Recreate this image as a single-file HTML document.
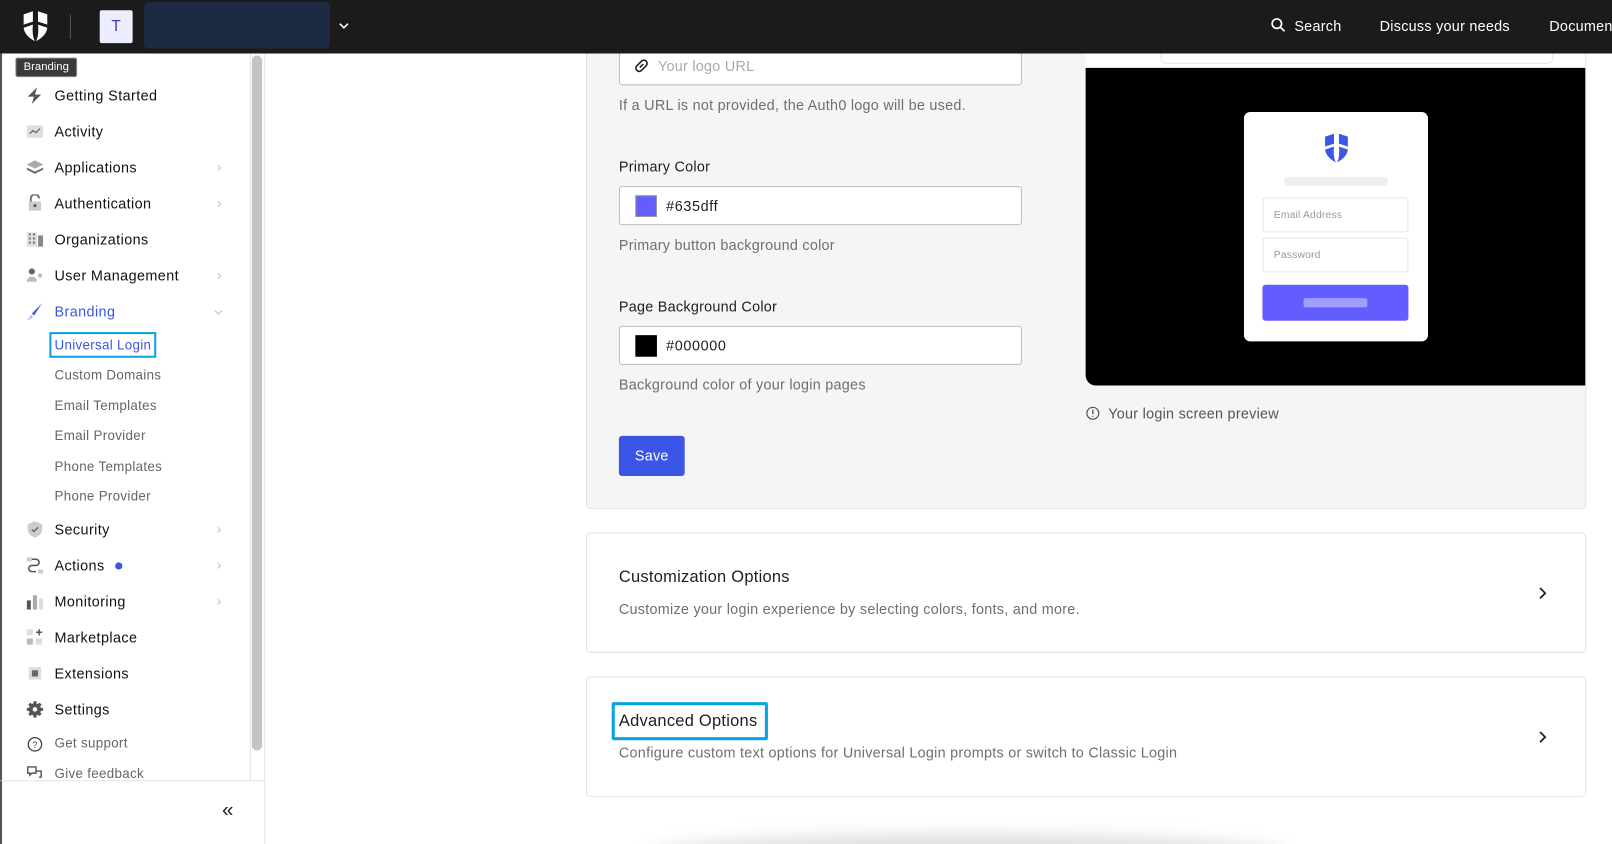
<!DOCTYPE html>
<html><head><meta charset="utf-8">
<style>
*{box-sizing:border-box;margin:0;padding:0}
html,body{width:1612px;height:844px;overflow:hidden;background:#fff;font-family:"Liberation Sans",sans-serif}
#w{position:absolute;left:0;top:0;width:1568px;height:821px;transform:scale(1.02806);transform-origin:0 0;overflow:hidden;background:#fff;letter-spacing:0.25px}
.abs{position:absolute}
.top{left:0;top:0;width:1568px;height:52px;background:#1b1b1b;z-index:5}
.side{left:0;top:52px;width:258px;height:769px;background:#fff;border-right:1px solid #e3e3e3;border-left:2px solid #555}
.nav{position:absolute;left:53px;font-size:14px;color:#111;letter-spacing:0.4px}
.sub{position:absolute;left:53px;font-size:13px;color:#666;letter-spacing:0.3px}
.ic{position:absolute;left:26px;width:16px;height:16px}
.chev{position:absolute;left:211px;color:#bbb;font-size:13px}
.card{background:#f5f5f5;border:1px solid #e3e3e3;border-radius:4px}
.input{position:absolute;left:602px;width:392px;height:38px;background:#fff;border:1px solid #bdbdbd;border-radius:3px}
.lbl{position:absolute;left:602px;font-size:14px;color:#1e1e1e}
.help{position:absolute;left:602px;font-size:14px;color:#6f6f6f}
</style></head><body><div id="w">
<div class="abs top">
 <svg class="abs" style="left:21px;top:11px" width="27" height="30" viewBox="0 0 27 30"><path d="M2 3 L11 0 L11 10 L2 13Z M16 0 L25 3 L25 13 L16 10Z M2 16 L11 13 Q10 24 13 29 Q3 24 2 16Z M25 16 L16 13 Q17 24 14 29 Q24 24 25 16Z" fill="#fff"/></svg>
 <div class="abs" style="left:68px;top:14px;width:1px;height:24px;background:#555"></div>
 <div class="abs" style="left:97px;top:10px;width:32px;height:32px;background:#eceefd;border-radius:2px;color:#3b3f9a;font-size:15px;text-align:center;line-height:32px">T</div>
 <div class="abs" style="left:140px;top:2px;width:181px;height:45px;background:#1c2a44;border-radius:4px"></div>
 <svg class="abs" style="left:329px;top:21px" width="11" height="8" viewBox="0 0 11 8"><path d="M1.5 2l4 4 4-4" stroke="#fff" stroke-width="1.5" fill="none"/></svg>
 <svg class="abs" style="left:1236px;top:17px" width="15" height="15" viewBox="0 0 15 15"><circle cx="6" cy="6" r="4.6" stroke="#fff" stroke-width="1.6" fill="none"/><path d="M9.5 9.5L13.5 13.5" stroke="#fff" stroke-width="1.6"/></svg>
 <div class="abs" style="left:1259px;top:17px;color:#fff;font-size:14px">Search</div>
 <div class="abs" style="left:1342px;top:17px;color:#fff;font-size:14px">Discuss your needs</div>
 <div class="abs" style="left:1507px;top:17px;color:#fff;font-size:14px;white-space:nowrap">Documentation</div>
</div>

<div class="abs side">
 <div class="abs" style="left:243px;top:2px;width:10px;height:676px;background:#c4c4c4;border-radius:5px"></div>
 <div class="abs" style="left:241px;top:0;width:1px;height:708px;background:#e3e3e3"></div>
</div>
<div class="abs" style="left:15px;top:56px;width:60px;height:19px;background:#3a3a3a;border:1px solid #888;border-radius:2px;color:#fff;font-size:11px;text-align:center;line-height:17px;z-index:6;letter-spacing:0">Branding</div>

<svg class="ic" style="top:85px" viewBox="0 0 16 16"><path d="M10 0L1 9h6l-2 7 9-9H8z" fill="#555"/></svg>
<div class="nav" style="top:85px">Getting Started</div>
<svg class="ic" style="top:121px;height:14px" viewBox="0 0 16 14"><rect width="16" height="12" y="1" rx="2" fill="#ddd"/><path d="M3 9l3-3 3 2 4-4" stroke="#666" stroke-width="1.2" fill="none"/></svg>
<div class="nav" style="top:120px">Activity</div>
<svg class="ic" style="top:155px" viewBox="0 0 16 16"><path d="M8 1L16 5L8 9L0 5Z" fill="#aaa"/><path d="M0 8L8 12L16 8V10L8 14L0 10Z" fill="#666"/></svg>
<div class="nav" style="top:155px">Applications</div><div class="chev" style="top:155px">&#8250;</div>
<svg class="ic" style="top:189px" viewBox="0 0 16 16"><path d="M4 7V4a4 4 0 0 1 8 0" stroke="#777" stroke-width="2" fill="none"/><rect x="2" y="7" width="12" height="9" rx="1" fill="#ccc"/><circle cx="8" cy="11" r="1.5" fill="#555"/></svg>
<div class="nav" style="top:190px">Authentication</div><div class="chev" style="top:190px">&#8250;</div>
<svg class="ic" style="top:226px;height:14px" viewBox="0 0 16 14"><rect x="0" y="0" width="10" height="14" fill="#ddd"/><rect x="11" y="3" width="5" height="11" fill="#888"/><path d="M2 2h2M6 2h2M2 6h2M6 6h2M2 10h2M6 10h2" stroke="#777" stroke-width="2"/></svg>
<div class="nav" style="top:225px">Organizations</div>
<svg class="ic" style="top:260px" viewBox="0 0 16 16"><circle cx="5" cy="4" r="3" fill="#666"/><path d="M0 14a5 5 0 0 1 10 0z" fill="#bbb"/><circle cx="13" cy="8" r="2" fill="#bbb"/></svg>
<div class="nav" style="top:260px">User Management</div><div class="chev" style="top:260px">&#8250;</div>
<svg class="ic" style="top:295px" viewBox="0 0 16 16"><path d="M15 0L5 10l2 2z" fill="#3b55e6"/><path d="M4 11l2 2q-3 4-6 3q3-1 4-5z" fill="#a9b5f2"/></svg>
<div class="nav" style="top:295px;color:#3b55e6">Branding</div>
<svg class="abs" style="left:208px;top:301px" width="9" height="6" viewBox="0 0 9 6"><path d="M1 1l3.5 3.5L8 1" stroke="#bbb" stroke-width="1" fill="none"/></svg>
<div class="abs" style="left:48px;top:323px;width:104px;height:25px;border:2px solid #0aa2e4"></div>
<div class="sub" style="top:328px;color:#3b55e6">Universal Login</div>
<div class="sub" style="top:357px">Custom Domains</div>
<div class="sub" style="top:387px">Email Templates</div>
<div class="sub" style="top:416px">Email Provider</div>
<div class="sub" style="top:446px">Phone Templates</div>
<div class="sub" style="top:475px">Phone Provider</div>
<svg class="ic" style="top:507px" viewBox="0 0 16 16"><path d="M8 0L15 3V8Q15 13 8 16Q1 13 1 8V3Z" fill="#ccc"/><path d="M5 8l2 2 4-4" stroke="#666" stroke-width="1.4" fill="none"/></svg>
<div class="nav" style="top:507px">Security</div><div class="chev" style="top:507px">&#8250;</div>
<svg class="ic" style="top:542px" viewBox="0 0 16 16"><rect x="0" y="0" width="5" height="4" fill="#ccc"/><path d="M5 2h4a3 3 0 0 1 0 6H5a3 3 0 0 0 0 6h4" stroke="#555" stroke-width="1.5" fill="none"/><rect x="11" y="12" width="5" height="4" fill="#ccc"/></svg>
<div class="nav" style="top:542px">Actions</div><div class="abs" style="left:112px;top:547px;width:7px;height:7px;border-radius:50%;background:#3b55e6"></div><div class="chev" style="top:542px">&#8250;</div>
<svg class="ic" style="top:577px" viewBox="0 0 16 16"><rect x="0" y="7" width="4" height="9" fill="#555"/><rect x="6" y="2" width="4" height="14" fill="#aaa"/><rect x="12" y="5" width="4" height="11" fill="#ddd"/></svg>
<div class="nav" style="top:577px">Monitoring</div><div class="chev" style="top:577px">&#8250;</div>
<svg class="ic" style="top:612px" viewBox="0 0 16 16"><rect x="0" y="0" width="6" height="6" fill="#ddd"/><rect x="0" y="9" width="6" height="6" fill="#bbb"/><rect x="9" y="9" width="6" height="6" fill="#ddd"/><path d="M12 0v6M9 3h6" stroke="#555" stroke-width="1.5"/></svg>
<div class="nav" style="top:612px">Marketplace</div>
<svg class="ic" style="top:647px" viewBox="0 0 16 16"><rect x="2" y="2" width="12" height="12" fill="#ddd"/><rect x="5" y="5" width="6" height="6" fill="#666"/></svg>
<div class="nav" style="top:647px">Extensions</div>
<svg class="ic" style="top:682px" viewBox="0 0 16 16"><circle cx="8" cy="8" r="6" fill="#555"/><path d="M8 0v16M0 8h16M2.5 2.5l11 11M13.5 2.5l-11 11" stroke="#555" stroke-width="3"/><circle cx="8" cy="8" r="2.2" fill="#fff"/></svg>
<div class="nav" style="top:682px">Settings</div>
<svg class="ic" style="top:716px" viewBox="0 0 16 16"><circle cx="8" cy="8" r="6.5" stroke="#444" stroke-width="1.3" fill="none"/><text x="8" y="11.5" font-size="9" text-anchor="middle" fill="#444" font-family="Liberation Sans">?</text></svg>
<div class="sub" style="top:715px">Get support</div>
<svg class="ic" style="top:745px" viewBox="0 0 16 16"><path d="M1 1h8v6H5l-2 2V7H1z" stroke="#555" stroke-width="1.4" fill="none"/><path d="M9 5h5v6h-2" stroke="#555" stroke-width="1.4" fill="none"/></svg>
<div class="sub" style="top:745px;height:14px;overflow:hidden">Give feedback</div>
<div class="abs" style="left:0;top:759px;width:258px;height:62px;background:#fff;border-top:1px solid #e3e3e3;border-left:2px solid #555;border-right:1px solid #e3e3e3"></div>
<div class="abs" style="left:216px;top:777px;font-size:20px;color:#1e1e1e">&#171;</div>

<!-- main -->
<div class="abs card" style="left:570px;top:30px;width:973px;height:465px"></div>
<div class="abs" style="left:1056px;top:30px;width:486px;height:36px;background:#fff"></div>
<div class="abs" style="left:1129px;top:40px;width:382px;height:22px;border:1px solid #e6e6e6;border-radius:5px;background:#fff"></div>
<div class="abs" style="left:1056px;top:66px;width:486px;height:309px;background:#000;border-bottom-left-radius:10px"></div>
<div class="abs" style="left:1210px;top:109px;width:179px;height:223px;background:#fff;border-radius:6px"></div>
<svg class="abs" style="left:1287px;top:128px" width="26" height="33" viewBox="0 0 27 30"><path d="M2 3 L11 0 L11 10 L2 13Z M16 0 L25 3 L25 13 L16 10Z M2 16 L11 13 Q10 24 13 29 Q3 24 2 16Z M25 16 L16 13 Q17 24 14 29 Q24 24 25 16Z" fill="#3b55e6"/></svg>
<div class="abs" style="left:1249px;top:172px;width:101px;height:9px;background:#eee;border-radius:4px"></div>
<div class="abs" style="left:1228px;top:192px;width:142px;height:34px;border:1px solid #e6e6e6;border-radius:3px;font-size:10px;color:#999;padding:11px 0 0 10px;letter-spacing:0.2px">Email Address</div>
<div class="abs" style="left:1228px;top:231px;width:142px;height:34px;border:1px solid #e6e6e6;border-radius:3px;font-size:10px;color:#999;padding:11px 0 0 10px;letter-spacing:0.2px">Password</div>
<div class="abs" style="left:1228px;top:277px;width:142px;height:35px;background:#635dff;border-radius:3px"></div>
<div class="abs" style="left:1268px;top:290px;width:62px;height:9px;background:#a09dff;border-radius:2px"></div>
<svg class="abs" style="left:1056px;top:395px" width="14" height="14" viewBox="0 0 14 14"><circle cx="7" cy="7" r="5.8" stroke="#555" stroke-width="1.2" fill="none"/><path d="M7 3.5v4.5M7 9.5v1" stroke="#555" stroke-width="1.3"/></svg>
<div class="abs" style="left:1078px;top:394px;font-size:14px;color:#555">Your login screen preview</div>

<div class="input" style="top:45px;height:38px"></div>
<div class="abs" style="left:0;top:0;width:1568px;height:52px;background:#1b1b1b;z-index:4"></div>
<svg class="abs" style="left:615px;top:55px" width="18" height="18" viewBox="0 0 16 16"><path d="M6.5 9.5l3-3M6 6l2-2a2.5 2.5 0 0 1 4 4l-2 2M10 10l-2 2a2.5 2.5 0 0 1-4-4l2-2" stroke="#222" stroke-width="1.4" fill="none"/></svg>
<div class="abs" style="left:640px;top:56px;font-size:14px;color:#aaa">Your logo URL</div>
<div class="help" style="top:94px">If a URL is not provided, the Auth0 logo will be used.</div>
<div class="lbl" style="top:154px">Primary Color</div>
<div class="input" style="top:181px"></div>
<div class="abs" style="left:618px;top:190px;width:21px;height:21px;background:#635dff;border:1px solid #999"></div>
<div class="abs" style="left:648px;top:192px;font-size:14px;color:#1e1e1e;letter-spacing:0.6px">#635dff</div>
<div class="help" style="top:230px">Primary button background color</div>
<div class="lbl" style="top:290px">Page Background Color</div>
<div class="input" style="top:317px"></div>
<div class="abs" style="left:618px;top:326px;width:21px;height:21px;background:#000"></div>
<div class="abs" style="left:648px;top:328px;font-size:14px;color:#1e1e1e;letter-spacing:0.6px">#000000</div>
<div class="help" style="top:366px">Background color of your login pages</div>
<div class="abs" style="left:602px;top:424px;width:64px;height:39px;background:#3b55e6;border-radius:3px;color:#fff;font-size:14px;text-align:center;line-height:39px">Save</div>

<div class="abs" style="left:570px;top:518px;width:973px;height:117px;border:1px solid #e3e3e3;border-radius:4px;background:#fff"></div>
<div class="abs" style="left:602px;top:553px;font-size:16px;color:#1e1e1e">Customization Options</div>
<div class="abs" style="left:602px;top:584px;font-size:14px;color:#6f6f6f">Customize your login experience by selecting colors, fonts, and more.</div>
<svg class="abs" style="left:1496px;top:570px" width="9" height="14" viewBox="0 0 9 14"><path d="M2 2l5 5-5 5" stroke="#1e1e1e" stroke-width="1.7" fill="none"/></svg>

<div class="abs" style="left:570px;top:658px;width:973px;height:117px;border:1px solid #e3e3e3;border-radius:4px;background:#fff"></div>
<div class="abs" style="left:595px;top:683px;width:152px;height:37px;border:3px solid #0aa2e4;border-radius:2px"></div>
<div class="abs" style="left:602px;top:693px;font-size:16px;color:#1e1e1e">Advanced Options</div>
<div class="abs" style="left:602px;top:724px;font-size:14px;color:#6f6f6f">Configure custom text options for Universal Login prompts or switch to Classic Login</div>
<svg class="abs" style="left:1496px;top:710px" width="9" height="14" viewBox="0 0 9 14"><path d="M2 2l5 5-5 5" stroke="#1e1e1e" stroke-width="1.7" fill="none"/></svg>

<div class="abs" style="left:630px;top:812px;width:620px;height:40px;border-radius:50%;background:#ddd;filter:blur(8px)"></div>
</div></body></html>
